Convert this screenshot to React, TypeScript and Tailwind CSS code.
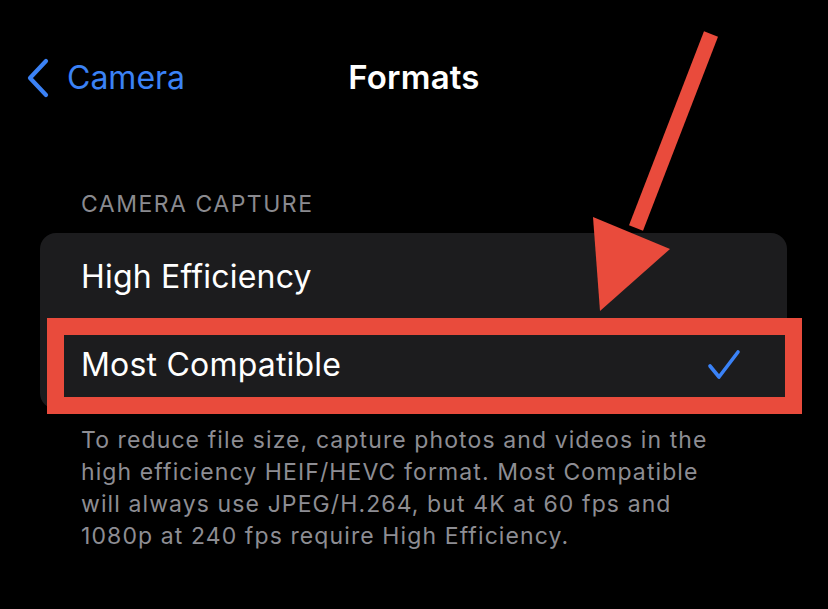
import React from 'react'

const font = { fontFamily: 'Inter, "Noto Sans", sans-serif' }

const ChevronLeft: React.FC = () => (
  <svg width="24" height="40" viewBox="0 0 24 40" fill="none" className="shrink-0">
    <path d="M20 3 L4 20 L20 37" stroke="#3b82f6" strokeWidth="4.2" strokeLinecap="round" strokeLinejoin="round" />
  </svg>
)

const Check: React.FC = () => (
  <svg width="34" height="32" viewBox="0 0 34 32" fill="none">
    <path d="M3 17 L12 28 L31 3" stroke="#3a82f7" strokeWidth="3.6" strokeLinecap="round" strokeLinejoin="round" />
  </svg>
)

// red annotation arrow drawn over the screenshot
const Arrow: React.FC = () => (
  <svg className="absolute left-0 top-0 pointer-events-none" width="828" height="609" viewBox="0 0 828 609">
    <line x1="711" y1="34" x2="636" y2="228" stroke="#e94b3c" strokeWidth="15" strokeLinecap="butt" />
    <polygon points="593,217 670,249 600,311" fill="#e94b3c" />
  </svg>
)

export default function App() {
  return (
    <div className="relative w-[828px] h-[609px] bg-black overflow-hidden text-white" style={font}>
      <div className="pt-[52px]">
        <div className="relative h-[52px] flex items-center pl-[26px]">
          <ChevronLeft />
          <span className="ml-[17px] text-[32px] tracking-[0px] text-[#3b82f6]">Camera</span>
          <div className="absolute inset-0 flex items-center justify-center pointer-events-none">
            <span className="text-[33px] font-semibold tracking-[0.2px]">Formats</span>
          </div>
        </div>
      </div>

      <div className="mt-[86px] pl-[81px] text-[23px] leading-[28px] text-[#8a8a8f] tracking-[1.5px]">CAMERA CAPTURE</div>

      <div className="relative mx-[40px] mt-[15px] w-[747px] rounded-[16px] bg-[#1c1c1e]">
        <div className="h-[88px] flex items-center pl-[41px] text-[32px] tracking-[0.2px]">High Efficiency</div>
        <div className="h-[88px] flex items-center justify-between pl-[41px] pr-[46px] text-[32px] tracking-[0.2px]">
          <span>Most Compatible</span>
          <Check />
        </div>
        <div className="absolute left-[7px] top-[85px] w-[755px] h-[96px] border-[17px] border-[#e94b3c] pointer-events-none" />
      </div>

      <p className="mt-[15px] pl-[81px] pr-[108px] text-[23px] leading-[32px] text-[#8d8d93] tracking-[1.1px]">
        To reduce file size, capture photos and videos in the high efficiency HEIF/HEVC format. Most Compatible will always use JPEG/H.264, but 4K at 60 fps and 1080p at 240 fps require High Efficiency.
      </p>

      <Arrow />
    </div>
  )
}
